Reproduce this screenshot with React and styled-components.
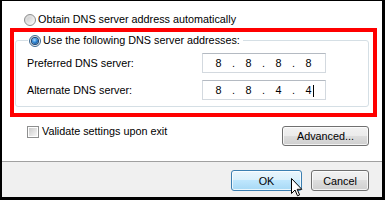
import React from 'react';
import styled, { createGlobalStyle } from 'styled-components';

const GlobalStyle = createGlobalStyle`
  html, body { margin: 0; padding: 0; background: #fff; }
  body {
    font-family: "Liberation Sans", Arial, sans-serif;
    font-size: 10.8px;
    color: #000;
  }
`;

const Frame = styled.div`
  position: relative;
  width: 385px;
  height: 200px;
  box-sizing: border-box;
  border: solid #000;
  border-width: 1px 3px 3px 2px;
  display: flex;
  flex-direction: column;
  background: #fff;
  overflow: hidden;
`;

const Page = styled.div`
  flex: 1;
  display: flex;
  flex-direction: column;
  padding: 11px 5px 0 8px;
`;

const OptionRow = styled.label`
  display: flex;
  align-items: center;
  height: 15px;
  line-height: 15px;
  margin-left: ${p => p.$indent || 0}px;
  white-space: nowrap;
`;

const Radio = styled.span`
  flex: none;
  width: 12px;
  height: 12px;
  box-sizing: border-box;
  margin-right: 2px;
  border-radius: 50%;
  border: 1px solid ${p => (p.$on ? '#3d6a92' : '#8e8f8f')};
  background: linear-gradient(135deg, #d2d2d2, #fafafa);
  display: flex;
  align-items: center;
  justify-content: center;
  &::after {
    content: '';
    width: 6px;
    height: 6px;
    border-radius: 50%;
    background: ${p =>
      p.$on
        ? 'radial-gradient(circle at 40% 35%, #a8dcff 0%, #2f86d6 45%, #0b3868 100%)'
        : 'linear-gradient(135deg, #cdcdcd, #f3f3f3)'};
    box-shadow: ${p => (p.$on ? '0 0 0 1px #1a4676' : 'none')};
  }
`;

const Highlight = styled.div`
  margin-top: 1px;
  border: 4px solid #ff0000;
  display: flex;
  flex-direction: column;
`;

const Group = styled.fieldset`
  margin: 1px 4px 6px 1px;
  padding: 5px 0 6px 11px;
  border: 1px solid #d5dfe5;
  border-radius: 3px;
  min-width: 0;
`;

const Legend = styled.legend`
  margin-left: 1px;
  padding: 0 3px 0 1px;
`;

const Fields = styled.div`
  display: grid;
  grid-template-columns: 175px 124px;
  grid-auto-rows: 20px;
  row-gap: 7px;
  align-items: center;
`;

const FieldLabel = styled.span`
  white-space: nowrap;
`;

const IpBox = styled.div`
  height: 20px;
  box-sizing: border-box;
  border: 1px solid #d3d9df;
  border-top-color: #b4bac2;
  background: #fff;
  display: flex;
  align-items: center;
  padding-left: 3px;
`;

const Octet = styled.span`
  width: 25px;
  text-align: center;
`;

const Digit = styled.span`
  position: relative;
  &::after {
    content: '';
    display: ${p => (p.$caret ? 'block' : 'none')};
    position: absolute;
    right: -2px;
    top: 1px;
    width: 1px;
    height: 12px;
    background: #000;
  }
`;

const Dot = styled.span`
  width: 5px;
  text-align: center;
`;

const BottomRow = styled.div`
  margin-top: 7px;
  padding: 0 8px 0 17px;
  display: flex;
  justify-content: space-between;
  align-items: flex-start;
`;

const Check = styled.span`
  flex: none;
  width: 12px;
  height: 12px;
  box-sizing: border-box;
  margin-right: 3px;
  padding: 1px;
  border: 1px solid #8e8f8f;
  background: #fff;
  &::after {
    content: '';
    display: block;
    width: 100%;
    height: 100%;
    background: linear-gradient(135deg, #cbcbcb, #f7f7f7);
  }
`;

const Button = styled.button`
  width: ${p => p.$w}px;
  height: ${p => p.$h || 21}px;
  margin-top: ${p => p.$top || 0}px;
  padding: 0;
  box-sizing: border-box;
  font: inherit;
  color: #000;
  border-radius: 3px;
  border: 1px solid ${p => (p.$hot ? '#3c7fb1' : '#707070')};
  background: ${p =>
    p.$hot
      ? 'linear-gradient(#eaf6fd 0%, #d9f0fc 50%, #bee6fd 50%, #a7d9f5 100%)'
      : 'linear-gradient(#f2f2f2 0%, #ebebeb 50%, #dddddd 50%, #cfcfcf 100%)'};
  box-shadow: inset 0 0 0 1px rgba(255, 255, 255, 0.75);
`;

const Footer = styled.div`
  height: 36px;
  box-sizing: border-box;
  border-top: 1px solid #a0a0a0;
  background: #f0f0f0;
  display: flex;
  justify-content: flex-end;
  gap: 9px;
  padding: 8px 13px 0 0;
`;

const Pointer = styled.svg`
  position: absolute;
  left: 289px;
  top: 177px;
`;

const IpField = ({ parts, caret }) => (
  <IpBox>
    {parts.map((n, i) => (
      <React.Fragment key={i}>
        {i > 0 && <Dot>.</Dot>}
        <Octet>
          <Digit $caret={caret && i === parts.length - 1}>{n}</Digit>
        </Octet>
      </React.Fragment>
    ))}
  </IpBox>
);

export default function App() {
  return (
    <>
      <GlobalStyle />
      <Frame>
        <Page>
          <OptionRow $indent={14}>
            <Radio />
            Obtain DNS server address automatically
          </OptionRow>
          <Highlight>
            <Group>
              <Legend>
                <OptionRow>
                  <Radio $on />
                  Use the following DNS server addresses:
                </OptionRow>
              </Legend>
              <Fields>
                <FieldLabel>Preferred DNS server:</FieldLabel>
                <IpField parts={['8', '8', '8', '8']} />
                <FieldLabel>Alternate DNS server:</FieldLabel>
                <IpField parts={['8', '8', '4', '4']} caret />
              </Fields>
            </Group>
          </Highlight>
          <BottomRow>
            <OptionRow>
              <Check />
              Validate settings upon exit
            </OptionRow>
            <Button $w={87} $h={20} $top={2}>Advanced...</Button>
          </BottomRow>
        </Page>
        <Footer>
          <Button $w={71} $hot>OK</Button>
          <Button $w={58}>Cancel</Button>
        </Footer>
        <Pointer width="12" height="19" viewBox="0 0 12 19">
          <path
            d="M0.5 0.5 L0.5 15.5 L4 12 L6.5 17.8 L8.6 16.9 L6.2 11.3 L10.8 11.3 Z"
            fill="#fff"
            stroke="#000"
            strokeWidth="1"
            strokeLinejoin="miter"
          />
        </Pointer>
      </Frame>
    </>
  );
}
